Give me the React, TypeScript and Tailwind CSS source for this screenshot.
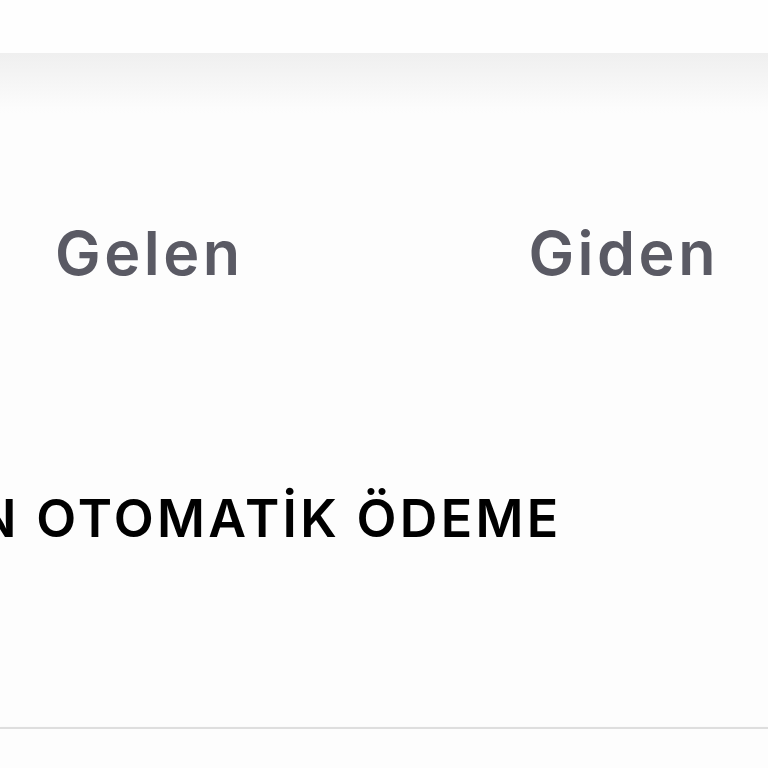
export default function App() {
  return (
    <div className="w-[768px] h-[768px] bg-[#fdfdfd] overflow-hidden flex flex-col" style={{ fontFamily: 'Inter, "Liberation Sans", sans-serif' }}>
      <div className="h-[53px] bg-[#fefefe] shrink-0" />
      <div className="h-[60px] shrink-0 bg-gradient-to-b from-[#efefef] to-[#fdfdfd]" />
      <div className="flex justify-between items-start pl-[55px] pr-[49px] pt-[110px] h-[222px] shrink-0">
        <span className="text-[61px] font-semibold text-[#5a5a64] leading-none tracking-[3.5px]">Gelen</span>
        <span className="text-[61px] font-semibold text-[#5a5a64] leading-none tracking-[3.5px]">Giden</span>
      </div>
      <div className="h-[392px] shrink-0 pt-[158px] overflow-hidden">
        <div className="whitespace-nowrap ml-[-23px] text-[52px] font-semibold text-black leading-none tracking-[3.3px]">N OTOMATİK ÖDEME</div>
      </div>
      <div className="h-[2px] bg-[#dedede] shadow-[0_1px_3px_rgba(0,0,0,0.08)] shrink-0" />
      <div className="flex-1 bg-[#fdfdfd]" />
    </div>
  );
}
